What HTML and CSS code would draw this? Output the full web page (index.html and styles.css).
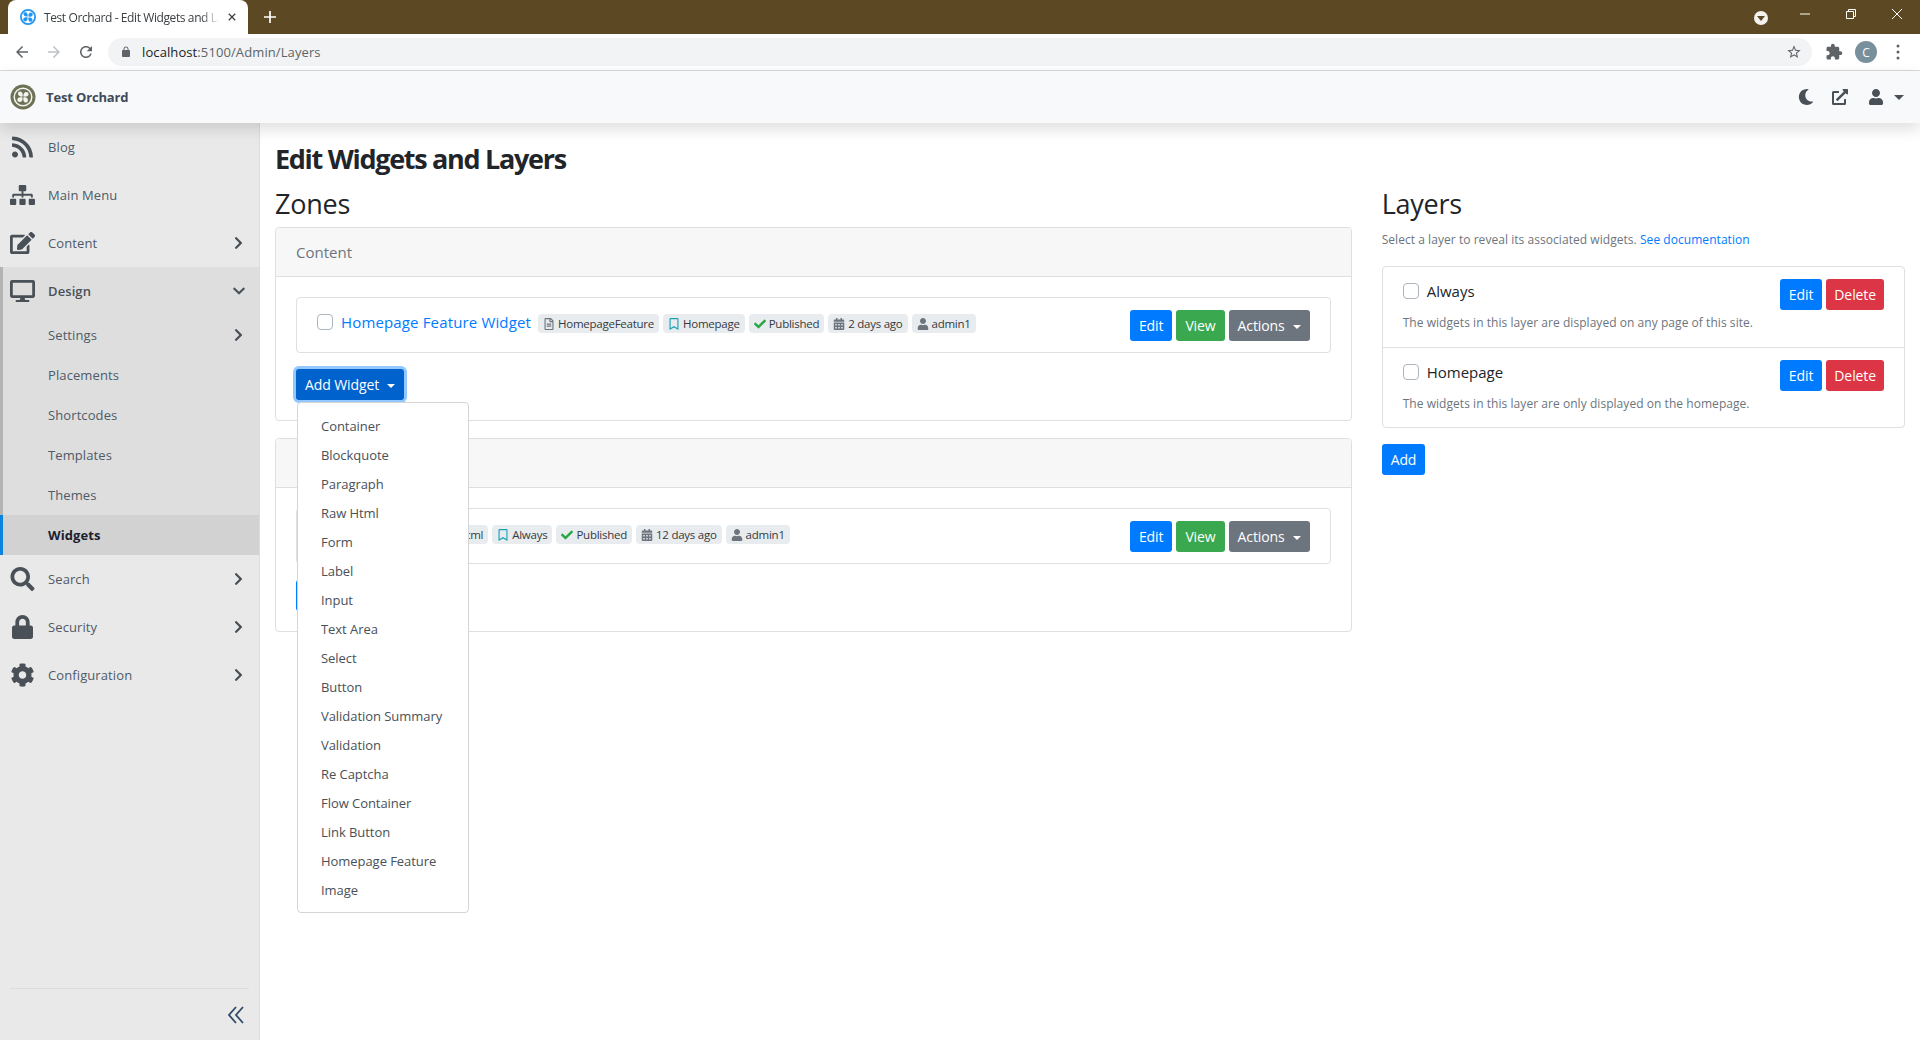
FILE: index.html
```html
<!DOCTYPE html>
<html lang="en">
<head>
    <meta charset="UTF-8">
    <title>Test Orchard - Edit Widgets and Layers</title>
    <link rel="stylesheet" href="styles.css">
</head>
<body>

    <!-- Icon set, used below with <use> -->
    <svg class="icon-defs" aria-hidden="true">
        <symbol id="i-rss" viewBox="0 0 448 512"><path d="M128.081 415.959c0 35.369-28.672 64.041-64.041 64.041S0 451.328 0 415.959s28.672-64.041 64.041-64.041 64.04 28.673 64.04 64.041zm175.66 47.25c-8.354-154.6-132.185-278.587-286.95-286.95C7.656 175.765 0 183.105 0 192.253v48.069c0 8.415 6.49 15.472 14.887 16.018 111.832 7.284 201.473 96.702 208.772 208.772.547 8.397 7.604 14.887 16.018 14.887h48.069c9.149.001 16.489-7.655 15.995-16.79zm144.249.288C439.596 229.677 251.465 40.445 16.503 32.01 7.473 31.686 0 38.981 0 48.016v48.068c0 8.625 6.835 15.645 15.453 15.999 191.179 7.839 344.627 161.316 352.465 352.465.353 8.618 7.373 15.453 15.999 15.453h48.068c9.034-.001 16.329-7.474 16.005-16.504z"/></symbol>
        <symbol id="i-sitemap" viewBox="0 0 640 512"><path d="M128 352H32c-17.67 0-32 14.33-32 32v96c0 17.67 14.33 32 32 32h96c17.67 0 32-14.33 32-32v-96c0-17.67-14.33-32-32-32zm-24-80h192v48h48v-48h192v48h48v-57.59c0-21.17-17.23-38.41-38.41-38.41H344v-64h40c17.67 0 32-14.33 32-32V32c0-17.67-14.33-32-32-32H256c-17.67 0-32 14.33-32 32v96c0 17.67 14.33 32 32 32h40v64H94.41C73.23 224 56 241.23 56 262.41V320h48v-48zm264 80h-96c-17.67 0-32 14.33-32 32v96c0 17.67 14.33 32 32 32h96c17.67 0 32-14.33 32-32v-96c0-17.67-14.33-32-32-32zm240 0h-96c-17.67 0-32 14.33-32 32v96c0 17.67 14.33 32 32 32h96c17.67 0 32-14.33 32-32v-96c0-17.67-14.33-32-32-32z"/></symbol>
        <symbol id="i-edit" viewBox="0 0 576 512"><path d="M402.6 83.2l90.2 90.2c3.8 3.8 3.8 10 0 13.8L274.4 405.6l-92.8 10.3c-12.4 1.4-22.9-9.1-21.5-21.5l10.3-92.8L388.8 83.2c3.8-3.8 10-3.8 13.8 0zm162-22.9l-48.8-48.8c-15.2-15.2-39.9-15.2-55.2 0l-35.4 35.4c-3.8 3.8-3.8 10 0 13.8l90.2 90.2c3.8 3.8 10 3.8 13.8 0l35.4-35.4c15.2-15.3 15.2-40 0-55.2zM384 346.2V448H64V128h229.8c3.2 0 6.2-1.3 8.5-3.5l40-40c7.6-7.6 2.2-20.5-8.5-20.5H48C21.5 64 0 85.5 0 112v352c0 26.5 21.5 48 48 48h352c26.5 0 48-21.5 48-48V306.2c0-10.7-12.9-16-20.5-8.5l-40 40c-2.2 2.3-3.5 5.3-3.5 8.5z"/></symbol>
        <symbol id="i-desktop" viewBox="0 0 576 512"><path d="M528 0H48C21.5 0 0 21.5 0 48v320c0 26.5 21.5 48 48 48h192l-16 48h-72c-13.3 0-24 10.7-24 24s10.7 24 24 24h272c13.3 0 24-10.7 24-24s-10.7-24-24-24h-72l-16-48h192c26.5 0 48-21.5 48-48V48c0-26.5-21.5-48-48-48zm-16 352H64V64h448v288z"/></symbol>
        <symbol id="i-search" viewBox="0 0 512 512"><path d="M505 442.7L405.3 343c-4.5-4.5-10.6-7-17-7H372c27.6-35.3 44-79.7 44-128C416 93.1 322.9 0 208 0S0 93.1 0 208s93.1 208 208 208c48.3 0 92.7-16.4 128-44v16.3c0 6.4 2.5 12.5 7 17l99.7 99.7c9.4 9.4 24.6 9.4 33.9 0l28.3-28.3c9.4-9.4 9.4-24.6.1-34zM208 336c-70.7 0-128-57.2-128-128 0-70.7 57.2-128 128-128 70.7 0 128 57.2 128 128 0 70.7-57.2 128-128 128z"/></symbol>
        <symbol id="i-lock" viewBox="0 0 448 512"><path d="M400 224h-24v-72C376 68.2 307.8 0 224 0S72 68.2 72 152v72H48c-26.5 0-48 21.5-48 48v192c0 26.5 21.5 48 48 48h352c26.5 0 48-21.5 48-48V272c0-26.5-21.5-48-48-48zm-104 0H152v-72c0-39.7 32.3-72 72-72s72 32.3 72 72v72z"/></symbol>
        <symbol id="i-cog" viewBox="0 0 512 512"><path d="M487.4 315.7l-42.6-24.6c4.3-23.2 4.3-47 0-70.2l42.6-24.6c4.9-2.8 7.1-8.6 5.5-14-11.1-35.6-30-67.8-54.7-94.6-3.8-4.1-10-5.1-14.8-2.3L380.8 110c-17.9-15.4-38.5-27.3-60.8-35.1V25.8c0-5.6-3.9-10.5-9.4-11.7-36.7-8.2-74.3-7.8-109.2 0-5.5 1.2-9.4 6.1-9.4 11.7V75c-22.2 7.9-42.8 19.8-60.8 35.1L88.7 85.5c-4.9-2.8-11-1.9-14.8 2.3-24.7 26.7-43.6 58.9-54.7 94.6-1.7 5.4.6 11.2 5.5 14L67.3 221c-4.3 23.2-4.3 47 0 70.2l-42.6 24.6c-4.9 2.8-7.1 8.6-5.5 14 11.1 35.6 30 67.8 54.7 94.6 3.8 4.1 10 5.1 14.8 2.3l42.6-24.6c17.9 15.4 38.5 27.3 60.8 35.1v49.2c0 5.6 3.9 10.5 9.4 11.7 36.7 8.2 74.3 7.8 109.2 0 5.5-1.2 9.4-6.1 9.4-11.7v-49.2c22.2-7.9 42.8-19.8 60.8-35.1l42.6 24.6c4.9 2.8 11 1.9 14.8-2.3 24.7-26.7 43.6-58.9 54.7-94.6 1.5-5.5-.7-11.3-5.6-14.1zM256 336c-44.1 0-80-35.9-80-80s35.9-80 80-80 80 35.9 80 80-35.9 80-80 80z"/></symbol>
        <symbol id="i-right" viewBox="0 0 320 512"><path d="M285.476 272.971L91.132 467.314c-9.373 9.373-24.569 9.373-33.941 0l-22.667-22.667c-9.357-9.357-9.375-24.522-.04-33.901L188.505 256 34.484 101.255c-9.335-9.379-9.317-24.544.04-33.901l22.667-22.667c9.373-9.373 24.569-9.373 33.941 0L285.475 239.03c9.373 9.372 9.373 24.568.001 33.941z"/></symbol>
        <symbol id="i-down" viewBox="0 0 448 512"><path d="M207.029 381.476L12.686 187.132c-9.373-9.373-9.373-24.569 0-33.941l22.667-22.667c9.357-9.357 24.522-9.375 33.901-.04L224 284.505l154.745-154.021c9.379-9.335 24.544-9.317 33.901.04l22.667 22.667c9.373 9.373 9.373 24.569 0 33.941L240.971 381.476c-9.373 9.372-24.569 9.372-33.942 0z"/></symbol>
        <symbol id="i-moon" viewBox="0 0 512 512"><path d="M283.211 512c78.962 0 151.079-35.925 198.857-94.792 7.068-8.708-.639-21.43-11.562-19.35-124.203 23.654-238.262-71.576-238.262-196.954 0-72.222 38.662-138.635 101.498-174.394 9.686-5.512 7.25-20.197-3.756-22.23A258.156 258.156 0 0 0 283.211 0c-141.309 0-256 114.511-256 256 0 141.309 114.511 256 256 256z"/></symbol>
        <symbol id="i-external" viewBox="0 0 512 512"><path d="M432,320H400a16,16,0,0,0-16,16V448H64V128H208a16,16,0,0,0,16-16V80a16,16,0,0,0-16-16H48A48,48,0,0,0,0,112V464a48,48,0,0,0,48,48H400a48,48,0,0,0,48-48V336A16,16,0,0,0,432,320ZM488,0h-128c-21.37,0-32.05,25.91-17,41l35.73,35.73L135,320.37a24,24,0,0,0,0,34L157.67,377a24,24,0,0,0,34,0L435.28,133.32,471,169c15,15,41,4.5,41-17V24A24,24,0,0,0,488,0Z"/></symbol>
        <symbol id="i-user" viewBox="0 0 448 512"><path d="M224 256c70.7 0 128-57.3 128-128S294.7 0 224 0 96 57.3 96 128s57.3 128 128 128zm89.6 32h-16.7c-22.2 10.2-46.9 16-72.9 16s-50.6-5.8-72.9-16h-16.7C60.2 288 0 348.2 0 422.4V464c0 26.5 21.5 48 48 48h352c26.5 0 48-21.5 48-48v-41.6c0-74.2-60.2-134.4-134.4-134.4z"/></symbol>
        <symbol id="i-check" viewBox="0 0 512 512"><path d="M173.898 439.404l-166.4-166.4c-9.997-9.997-9.997-26.206 0-36.204l36.203-36.204c9.997-9.998 26.207-9.998 36.204 0L192 312.69 432.095 72.596c9.997-9.997 26.207-9.997 36.204 0l36.203 36.204c9.997 9.997 9.997 26.206 0 36.204l-294.4 294.401c-9.998 9.997-26.207 9.997-36.204-.001z"/></symbol>
        <symbol id="i-calendar" viewBox="0 0 448 512"><path d="M0 464c0 26.5 21.5 48 48 48h352c26.5 0 48-21.5 48-48V192H0v272zm320-196c0-6.6 5.4-12 12-12h40c6.6 0 12 5.4 12 12v40c0 6.6-5.4 12-12 12h-40c-6.6 0-12-5.4-12-12v-40zm0 128c0-6.6 5.4-12 12-12h40c6.6 0 12 5.4 12 12v40c0 6.6-5.4 12-12 12h-40c-6.6 0-12-5.4-12-12v-40zM192 268c0-6.6 5.4-12 12-12h40c6.6 0 12 5.4 12 12v40c0 6.6-5.4 12-12 12h-40c-6.6 0-12-5.4-12-12v-40zm0 128c0-6.6 5.4-12 12-12h40c6.6 0 12 5.4 12 12v40c0 6.6-5.4 12-12 12h-40c-6.6 0-12-5.4-12-12v-40zM64 268c0-6.6 5.4-12 12-12h40c6.6 0 12 5.4 12 12v40c0 6.6-5.4 12-12 12H76c-6.6 0-12-5.4-12-12v-40zm0 128c0-6.6 5.4-12 12-12h40c6.6 0 12 5.4 12 12v40c0 6.6-5.4 12-12 12H76c-6.6 0-12-5.4-12-12v-40zM400 64h-48V16c0-8.8-7.2-16-16-16h-32c-8.8 0-16 7.2-16 16v48H160V16c0-8.8-7.2-16-16-16h-32c-8.8 0-16 7.2-16 16v48H48C21.5 64 0 85.5 0 112v48h448v-48c0-26.5-21.5-48-48-48z"/></symbol>
        <symbol id="i-file" viewBox="0 0 384 512"><path d="M288 248v28c0 6.6-5.4 12-12 12H108c-6.6 0-12-5.4-12-12v-28c0-6.6 5.4-12 12-12h168c6.6 0 12 5.4 12 12zm-12 72H108c-6.6 0-12 5.4-12 12v28c0 6.6 5.4 12 12 12h168c6.6 0 12-5.4 12-12v-28c0-6.6-5.4-12-12-12zm108-188.1V464c0 26.5-21.5 48-48 48H48c-26.5 0-48-21.5-48-48V48C0 21.5 21.5 0 48 0h204.1C264.8 0 277 5.1 286 14.1L369.9 98c9 8.9 14.1 21.2 14.1 33.9zm-128-80V128h76.1L256 51.9zM336 464V176H232c-13.3 0-24-10.7-24-24V48H48v416h288z"/></symbol>
        <symbol id="i-bookmark" viewBox="0 0 384 512"><path d="M336 0H48C21.49 0 0 21.49 0 48v464l192-112 192 112V48c0-26.51-21.49-48-48-48zm0 428.43l-144-84-144 84V54a6 6 0 0 1 6-6h276c3.31 0 6 2.69 6 6z"/></symbol>
    </svg>

    <!-- Browser tab strip -->
    <div class="tabstrip">
        <div class="tab">
            <svg class="favicon" viewBox="0 0 16 16"><circle cx="8" cy="8" r="7.1" fill="none" stroke="#2196f3" stroke-width="1.8"/><path d="M7.6 7.6C3.8 7.9 2.6 5.2 4.2 3.6 6.6 2.4 8.2 4.6 7.6 7.6zM8.4 7.6C8.1 3.8 10.8 2.6 12.4 4.2 13.6 6.6 11.4 8.2 8.4 7.6zM8.4 8.4C12.2 8.1 13.4 10.8 11.8 12.4 9.4 13.6 7.8 11.4 8.4 8.4zM7.6 8.4C7.9 12.2 5.2 13.4 3.6 11.8 2.4 9.4 4.6 7.8 7.6 8.4z" fill="#2196f3"/></svg>
            <span class="tab-title">Test Orchard - Edit Widgets and Layers</span>
            <svg class="tab-close" viewBox="0 0 10 10"><path d="M1 1l8 8M9 1l-8 8" stroke="#3c4043" stroke-width="1.6"/></svg>
        </div>
        <svg class="tab-new" viewBox="0 0 12 12"><path d="M6 0v12M0 6h12" stroke="#fff" stroke-width="1.7"/></svg>
        <div class="tabstrip-space"></div>
        <div class="tab-search"><span class="tab-search-arrow"></span></div>
        <div class="winbtn"><svg width="10" height="10" viewBox="0 0 10 10"><path d="M0 5h10" stroke="#fff"/></svg></div>
        <div class="winbtn"><svg width="10" height="10" viewBox="0 0 10 10"><path d="M.5 2.5h7v7h-7zM2.5 2.5v-2h7v7h-2" fill="none" stroke="#fff"/></svg></div>
        <div class="winbtn"><svg width="10" height="10" viewBox="0 0 10 10"><path d="M0 0l10 10M10 0L0 10" stroke="#fff"/></svg></div>
    </div>

    <!-- Browser toolbar -->
    <div class="toolbar">
        <div class="toolbtn"><svg class="chrome-icon" viewBox="0 0 24 24"><path d="M20 11H7.83l5.59-5.59L12 4l-8 8 8 8 1.41-1.41L7.83 13H20v-2z"/></svg></div>
        <div class="toolbtn"><svg class="chrome-icon disabled" viewBox="0 0 24 24"><path d="M4 11h12.17l-5.59-5.59L12 4l8 8-8 8-1.41-1.41L16.17 13H4v-2z"/></svg></div>
        <div class="toolbtn"><svg class="chrome-icon" viewBox="0 0 24 24"><path d="M17.65 6.35C16.2 4.9 14.21 4 12 4c-4.42 0-7.99 3.58-7.99 8s3.57 8 7.99 8c3.73 0 6.84-2.55 7.73-6h-2.08c-.82 2.33-3.04 4-5.65 4-3.31 0-6-2.69-6-6s2.69-6 6-6c1.66 0 3.14.69 4.22 1.78L13 11h7V4l-2.35 2.35z"/></svg></div>
        <div class="omnibox">
            <svg class="omni-lock" viewBox="0 0 24 24"><path d="M18 8h-1V6c0-2.76-2.24-5-5-5S7 3.24 7 6v2H6c-1.1 0-2 .9-2 2v10c0 1.1.9 2 2 2h12c1.1 0 2-.9 2-2V10c0-1.1-.9-2-2-2zM15.1 8H8.9V6c0-1.71 1.39-3.1 3.1-3.1s3.1 1.39 3.1 3.1v2z"/></svg>
            <span class="url"><span class="url-host">localhost</span>:5100/Admin/Layers</span>
            <svg class="omni-star" viewBox="0 0 24 24"><path d="M22 9.24l-7.19-.62L12 2 9.19 8.63 2 9.24l5.46 4.73L5.82 21 12 17.27 18.18 21l-1.63-7.03L22 9.24zM12 15.4l-3.76 2.27 1-4.28-3.32-2.88 4.38-.38L12 6.1l1.71 4.04 4.38.38-3.32 2.88 1 4.28L12 15.4z"/></svg>
        </div>
        <div class="toolbtn first-ext"><svg class="chrome-icon" viewBox="0 0 24 24"><path d="M20.5 11H19V7c0-1.1-.9-2-2-2h-4V3.5C13 2.12 11.88 1 10.5 1S8 2.12 8 3.5V5H4c-1.1 0-1.99.9-1.99 2v3.8H3.5c1.49 0 2.7 1.21 2.7 2.7s-1.21 2.7-2.7 2.7H2V20c0 1.1.9 2 2 2h3.8v-1.5c0-1.49 1.21-2.7 2.7-2.7 1.49 0 2.7 1.21 2.7 2.7V22H17c1.1 0 2-.9 2-2v-4h1.5c1.38 0 2.5-1.12 2.5-2.5S21.88 11 20.5 11z"/></svg></div>
        <div class="toolbtn"><span class="avatar">C</span></div>
        <div class="toolbtn"><svg class="chrome-dots" viewBox="0 0 4 16"><circle cx="2" cy="2" r="1.5"/><circle cx="2" cy="8" r="1.5"/><circle cx="2" cy="14" r="1.5"/></svg></div>
    </div>

    <!-- Admin top bar -->
    <header class="navbar">
        <svg class="brand-logo" viewBox="0 0 26 26">
            <circle cx="13" cy="13" r="12.5" fill="#6d7155"/>
            <circle cx="13" cy="13" r="8.8" fill="none" stroke="#f4f4ee" stroke-width="1.5"/>
            <path d="M12.6 12.6C8.4 13 7 10 8.8 7.8 11.6 6.4 13.2 8.8 12.6 12.6zM13.4 12.6C13 8.4 16 7 18.2 8.8 19.6 11.6 17.2 13.2 13.4 12.6zM13.4 13.4C17.6 13 19 16 17.2 18.2 14.4 19.6 12.8 17.2 13.4 13.4zM12.6 13.4C13 17.6 10 19 7.8 17.2 6.4 14.4 8.8 12.8 12.6 13.4z" fill="#f4f4ee"/>
        </svg>
        <span class="brand-name">Test Orchard</span>
        <div class="navbar-space"></div>
        <svg class="nav-icon"><use href="#i-moon"/></svg>
        <svg class="nav-icon"><use href="#i-external"/></svg>
        <svg class="nav-icon nav-user"><use href="#i-user"/></svg>
        <span class="nav-caret"></span>
    </header>

    <div class="layout">

        <!-- Sidebar -->
        <aside class="sidebar">
            <nav class="menu">
                <a class="menu-item"><svg class="menu-icon"><use href="#i-rss"/></svg>Blog</a>
                <a class="menu-item"><svg class="menu-icon"><use href="#i-sitemap"/></svg>Main Menu</a>
                <a class="menu-item"><svg class="menu-icon"><use href="#i-edit"/></svg>Content<svg class="menu-arrow"><use href="#i-right"/></svg></a>
                <div class="menu-group">
                    <a class="menu-item open"><svg class="menu-icon"><use href="#i-desktop"/></svg>Design<svg class="menu-arrow down"><use href="#i-down"/></svg></a>
                    <a class="submenu-item">Settings<svg class="menu-arrow"><use href="#i-right"/></svg></a>
                    <a class="submenu-item">Placements</a>
                    <a class="submenu-item">Shortcodes</a>
                    <a class="submenu-item">Templates</a>
                    <a class="submenu-item">Themes</a>
                    <a class="submenu-item active">Widgets</a>
                </div>
                <a class="menu-item"><svg class="menu-icon"><use href="#i-search"/></svg>Search<svg class="menu-arrow"><use href="#i-right"/></svg></a>
                <a class="menu-item"><svg class="menu-icon"><use href="#i-lock"/></svg>Security<svg class="menu-arrow"><use href="#i-right"/></svg></a>
                <a class="menu-item"><svg class="menu-icon"><use href="#i-cog"/></svg>Configuration<svg class="menu-arrow"><use href="#i-right"/></svg></a>
            </nav>
            <div class="sidebar-footer">
                <svg class="collapse-icon" viewBox="0 0 16 18"><path d="M8 1L1 9l7 8M15 1L8 9l7 8" fill="none" stroke="#2f4a66" stroke-width="1.8"/></svg>
            </div>
        </aside>

        <!-- Main content -->
        <main class="main">
            <h1 class="page-title">Edit Widgets and Layers</h1>
            <div class="columns">

                <section class="col-zones">
                    <h2>Zones</h2>

                    <div class="card">
                        <div class="card-header">Content</div>
                        <div class="card-body">
                            <div class="widget-row">
                                <input type="checkbox" class="check">
                                <a class="widget-title">Homepage Feature Widget</a>
                                <span class="badge"><svg class="badge-icon grey"><use href="#i-file"/></svg>HomepageFeature</span>
                                <span class="badge"><svg class="badge-icon teal"><use href="#i-bookmark"/></svg>Homepage</span>
                                <span class="badge"><svg class="badge-icon green"><use href="#i-check"/></svg>Published</span>
                                <span class="badge"><svg class="badge-icon grey"><use href="#i-calendar"/></svg>2 days ago</span>
                                <span class="badge"><svg class="badge-icon grey"><use href="#i-user"/></svg>admin1</span>
                                <div class="row-actions">
                                    <button class="btn blue">Edit</button>
                                    <button class="btn green">View</button>
                                    <button class="btn grey">Actions<span class="caret"></span></button>
                                </div>
                            </div>
                            <div class="dropdown">
                                <button class="btn blue-focus">Add Widget<span class="caret"></span></button>
                                <ul class="dropdown-menu">
                                    <li>Container</li>
                                    <li>Blockquote</li>
                                    <li>Paragraph</li>
                                    <li>Raw Html</li>
                                    <li>Form</li>
                                    <li>Label</li>
                                    <li>Input</li>
                                    <li>Text Area</li>
                                    <li>Select</li>
                                    <li>Button</li>
                                    <li>Validation Summary</li>
                                    <li>Validation</li>
                                    <li>Re Captcha</li>
                                    <li>Flow Container</li>
                                    <li>Link Button</li>
                                    <li>Homepage Feature</li>
                                    <li>Image</li>
                                </ul>
                            </div>
                        </div>
                    </div>

                    <div class="card">
                        <div class="card-header">Footer</div>
                        <div class="card-body">
                            <div class="widget-row">
                                <input type="checkbox" class="check">
                                <a class="widget-title">Raw Html</a>
                                <span class="badge"><svg class="badge-icon grey"><use href="#i-file"/></svg>RawHtml</span>
                                <span class="badge"><svg class="badge-icon teal"><use href="#i-bookmark"/></svg>Always</span>
                                <span class="badge"><svg class="badge-icon green"><use href="#i-check"/></svg>Published</span>
                                <span class="badge"><svg class="badge-icon grey"><use href="#i-calendar"/></svg>12 days ago</span>
                                <span class="badge"><svg class="badge-icon grey"><use href="#i-user"/></svg>admin1</span>
                                <div class="row-actions">
                                    <button class="btn blue">Edit</button>
                                    <button class="btn green">View</button>
                                    <button class="btn grey">Actions<span class="caret"></span></button>
                                </div>
                            </div>
                            <div class="dropdown">
                                <button class="btn blue">Add Widget<span class="caret"></span></button>
                            </div>
                        </div>
                    </div>
                </section>

                <section class="col-layers">
                    <h2>Layers</h2>
                    <p class="layers-hint">Select a layer to reveal its associated widgets. <a>See documentation</a></p>
                    <div class="layer-list">
                        <div class="layer-row">
                            <div class="layer-text">
                                <div class="layer-name"><input type="checkbox" class="check">Always</div>
                                <div class="layer-desc">The widgets in this layer are displayed on any page of this site.</div>
                            </div>
                            <div class="row-actions">
                                <button class="btn blue">Edit</button>
                                <button class="btn red">Delete</button>
                            </div>
                        </div>
                        <div class="layer-row">
                            <div class="layer-text">
                                <div class="layer-name"><input type="checkbox" class="check">Homepage</div>
                                <div class="layer-desc">The widgets in this layer are only displayed on the homepage.</div>
                            </div>
                            <div class="row-actions">
                                <button class="btn blue">Edit</button>
                                <button class="btn red">Delete</button>
                            </div>
                        </div>
                    </div>
                    <button class="btn blue add-layer">Add</button>
                </section>

            </div>
        </main>
    </div>

</body>
</html>
```

FILE: styles.css
```css
/* General page */
* {
    box-sizing: border-box;
}

html, body {
    height: 100%;
}

body {
    margin: 0;
    display: flex;
    flex-direction: column;
    overflow: hidden;
    font-family: "Open Sans", "Noto Sans", sans-serif;
    font-size: 13px;
    color: #212529;
    background-color: #fff;
}

.icon-defs {
    display: none;
}

/* Browser tab strip */
.tabstrip {
    display: flex;
    align-items: center;
    height: 34px;
    flex-shrink: 0;
    background-color: #5c4822;
}

.tab {
    position: relative;
    display: flex;
    align-items: center;
    align-self: stretch;
    width: 240px;
    margin-left: 8px;
    padding-left: 12px;
    background-color: #fff;
    border-radius: 8px 8px 0 0;
}

.favicon {
    width: 16px;
    height: 16px;
    flex-shrink: 0;
}

.tab-title {
    width: 175px;
    margin-left: 8px;
    overflow: hidden;
    white-space: nowrap;
    font-size: 12px;
    letter-spacing: -0.4px;
    color: #3c4043;
    -webkit-mask-image: linear-gradient(to right, #000 90%, transparent);
    mask-image: linear-gradient(to right, #000 90%, transparent);
}

.tab-close {
    width: 8px;
    height: 8px;
    margin-left: 9px;
}

.tab-new {
    width: 12px;
    height: 12px;
    margin-left: 16px;
}

.tabstrip-space {
    flex: 1;
}

.tab-search {
    display: flex;
    align-items: center;
    justify-content: center;
    width: 14px;
    height: 14px;
    margin-right: 14px;
    margin-top: 1px;
    border-radius: 50%;
    background-color: #f4f2ee;
}

.tab-search-arrow {
    width: 0;
    height: 0;
    margin-top: 2px;
    border-left: 4px solid transparent;
    border-right: 4px solid transparent;
    border-top: 5px solid #5c4822;
}

.winbtn {
    display: flex;
    align-items: center;
    justify-content: center;
    width: 46px;
    height: 28px;
    align-self: flex-start;
}

/* Browser toolbar */
.toolbar {
    display: flex;
    align-items: center;
    height: 37px;
    flex-shrink: 0;
    padding: 0 6px;
    background-color: #fff;
    border-bottom: 1px solid #d8dadd;
}

.toolbtn {
    display: flex;
    align-items: center;
    justify-content: center;
    width: 32px;
    height: 28px;
}

.chrome-icon {
    width: 18px;
    height: 18px;
    fill: #5f6368;
}

.chrome-icon.disabled {
    fill: #bdc1c6;
}

.chrome-dots {
    width: 4px;
    height: 16px;
    fill: #5f6368;
}

.omnibox {
    flex: 1;
    display: flex;
    align-items: center;
    height: 28px;
    margin: 0 6px;
    padding: 0 10px 0 12px;
    border-radius: 14px;
    background-color: #f1f3f4;
}

.omni-lock {
    width: 12px;
    height: 12px;
    fill: #5f6368;
}

.url {
    flex: 1;
    margin-left: 10px;
    font-size: 13px;
    letter-spacing: 0.1px;
    color: #5f6368;
}

.url-host {
    color: #202124;
}

.omni-star {
    width: 16px;
    height: 16px;
    fill: #5f6368;
}

.avatar {
    display: flex;
    align-items: center;
    justify-content: center;
    width: 22px;
    height: 22px;
    border-radius: 50%;
    background-color: #78909c;
    font-size: 12px;
    color: #fff;
}

/* Admin top bar */
.navbar {
    position: relative;
    z-index: 5;
    display: flex;
    align-items: center;
    height: 52px;
    flex-shrink: 0;
    padding: 0 16px 0 10px;
    background-color: #f8f9fa;
    box-shadow: 0 6px 14px rgba(0, 0, 0, 0.13);
}

.brand-logo {
    width: 26px;
    height: 26px;
}

.brand-name {
    margin-left: 10px;
    font-size: 13px;
    font-weight: 700;
    letter-spacing: -0.15px;
    color: #3f4a5a;
}

.navbar-space {
    flex: 1;
}

.nav-icon {
    width: 16px;
    height: 16px;
    margin-left: 18px;
    fill: #495057;
}

.nav-icon.nav-user {
    margin-left: 20px;
}

.nav-caret {
    width: 0;
    height: 0;
    margin-left: 10px;
    border-left: 5px solid transparent;
    border-right: 5px solid transparent;
    border-top: 5px solid #495057;
}

/* Layout */
.layout {
    flex: 1;
    display: flex;
    min-height: 0;
}

/* Sidebar */
.sidebar {
    display: flex;
    flex-direction: column;
    width: 260px;
    flex-shrink: 0;
    background-color: #e9e9e9;
    border-right: 1px solid #dcdcdc;
}

.menu {
    flex: 1;
    letter-spacing: 0.1px;
}

.menu-item {
    display: flex;
    align-items: center;
    height: 48px;
    padding: 0 14px 1px 48px;
    position: relative;
    color: #4f5b67;
}

.menu-icon {
    position: absolute;
    left: 10px;
    top: 12px;
    width: 25px;
    height: 24px;
    fill: #495057;
}

.menu-arrow {
    width: 9px;
    height: 14px;
    margin-left: auto;
    margin-right: 2px;
    fill: #495057;
}

.menu-arrow.down {
    width: 12px;
    margin-right: 0;
}

.menu-group {
    background-color: #dedede;
    border-left: 3px solid #b4b4b4;
}

.menu-group .menu-item {
    padding-left: 45px;
    font-weight: 600;
    color: #495057;
}

.menu-group .menu-icon {
    left: 7px;
}

.submenu-item {
    display: flex;
    align-items: center;
    height: 40px;
    padding: 0 14px 1px 45px;
    color: #4f5b67;
}

.submenu-item.active {
    position: relative;
    font-weight: 700;
    color: #1b2130;
    background-color: #d2d2d2;
}

/* blue marker sits over the grey group border */
.submenu-item.active::before {
    content: "";
    position: absolute;
    left: -3px;
    top: 0;
    bottom: 0;
    width: 3px;
    background-color: #0a84e0;
}

.sidebar-footer {
    display: flex;
    justify-content: flex-end;
    align-items: center;
    height: 52px;
    margin: 0 10px;
    padding: 1px 5px 0 0;
    border-top: 1px solid #dddddd;
}

.collapse-icon {
    width: 16px;
    height: 18px;
}

/* Main content */
.main {
    flex: 1;
    min-width: 0;
    padding-top: 19px;
}

.page-title {
    margin: 0 0 11px 15px;
    font-size: 27px;
    line-height: 34px;
    font-weight: 700;
    letter-spacing: -1.3px;
}

h2 {
    margin: 0 0 6px;
    font-size: 27px;
    line-height: 34px;
    font-weight: 500;
    letter-spacing: -0.25px;
}

.columns {
    display: flex;
}

.col-zones {
    width: 66.6667%;
    padding: 0 15px;
}

.col-layers {
    width: 33.3333%;
    padding: 0 15px;
}

/* Zone cards */
.card {
    margin-bottom: 17px;
    border: 1px solid #dfdfdf;
    border-radius: 4px;
    background-color: #fff;
}

.card-header {
    height: 49px;
    padding: 0 20px;
    line-height: 48px;
    font-size: 15px;
    color: #6c757d;
    background-color: #f7f7f7;
    border-bottom: 1px solid #dfdfdf;
    border-radius: 4px 4px 0 0;
}

.card-body {
    padding: 20px;
}

.widget-row {
    display: flex;
    align-items: flex-start;
    height: 56px;
    padding: 12px 20px;
    border: 1px solid #dfdfdf;
    border-radius: 4px;
}

.check {
    appearance: none;
    width: 16px;
    height: 16px;
    margin: 4px 8px 0 0;
    flex-shrink: 0;
    border: 1px solid #adb5bd;
    border-radius: 4px;
    background-color: #fff;
}

.widget-title {
    margin-right: 7px;
    font-size: 15px;
    line-height: 24px;
    letter-spacing: 0.15px;
    color: #007bff;
}

.badge {
    display: flex;
    align-items: center;
    height: 19px;
    margin: 4px 4px 0 0;
    padding: 0 5px;
    border-radius: 4px;
    font-size: 11.5px;
    letter-spacing: -0.25px;
    color: #343a40;
    background-color: #e9ecef;
    white-space: nowrap;
}

.badge-icon {
    width: 12px;
    height: 12px;
    margin-right: 3px;
}

.badge-icon.grey {
    fill: #6c757d;
}

.badge-icon.teal {
    fill: #17a2b8;
}

.badge-icon.green {
    fill: #28a745;
}

.row-actions {
    display: flex;
    gap: 4px;
    margin-left: auto;
    flex-shrink: 0;
}

/* Buttons */
.btn {
    height: 31px;
    padding: 0 9px;
    border: 0;
    border-radius: 3px;
    font-family: inherit;
    font-size: 14px;
    letter-spacing: -0.1px;
    color: #fff;
    white-space: nowrap;
}

.btn.blue {
    background-color: #007bff;
}

.btn.green {
    background-color: #3aa84e;
}

.btn.grey {
    background-color: #6c757d;
}

.btn.red {
    padding: 0 8px;
    background-color: #dc3545;
}

.btn.blue-focus {
    background-color: #0062cc;
    box-shadow: 0 0 0 3px rgba(38, 143, 255, 0.5);
}

.caret {
    display: inline-block;
    margin-left: 8px;
    vertical-align: 2px;
    border-left: 4px solid transparent;
    border-right: 4px solid transparent;
    border-top: 4px solid #fff;
}

.dropdown {
    position: relative;
    margin-top: 16px;
    height: 31px;
}

/* 1px in from the button, the covered Add Widget edge shows on the left */
.dropdown-menu {
    position: absolute;
    z-index: 10;
    top: 33px;
    left: 1px;
    width: 172px;
    margin: 0;
    padding: 9px 0 7px;
    list-style: none;
    background-color: #fff;
    border: 1px solid #d5d5d5;
    border-radius: 4px;
}

.dropdown-menu li {
    height: 29px;
    padding: 0 23px;
    line-height: 29px;
    color: #495057;
    letter-spacing: -0.05px;
    white-space: nowrap;
}

/* Layers column */
.layers-hint {
    margin: 0 0 16px;
    padding-top: 3px;
    font-size: 12px;
    line-height: 20px;
    letter-spacing: 0.05px;
    color: #6c757d;
}

.layers-hint a {
    color: #007bff;
}

.layer-list {
    border: 1px solid #dfdfdf;
    border-radius: 4px;
}

.layer-row {
    display: flex;
    justify-content: space-between;
    align-items: flex-start;
    height: 80px;
    padding: 12px 20px 0 20px;
}

.layer-row + .layer-row {
    border-top: 1px solid #dfdfdf;
}

.layer-name {
    display: flex;
    align-items: flex-start;
    font-size: 15px;
    line-height: 24px;
    color: #212529;
}

.layer-desc {
    margin-top: 11px;
    font-size: 12px;
    line-height: 18px;
    letter-spacing: 0.05px;
    color: #6c757d;
}

.add-layer {
    margin-top: 16px;
}
```
